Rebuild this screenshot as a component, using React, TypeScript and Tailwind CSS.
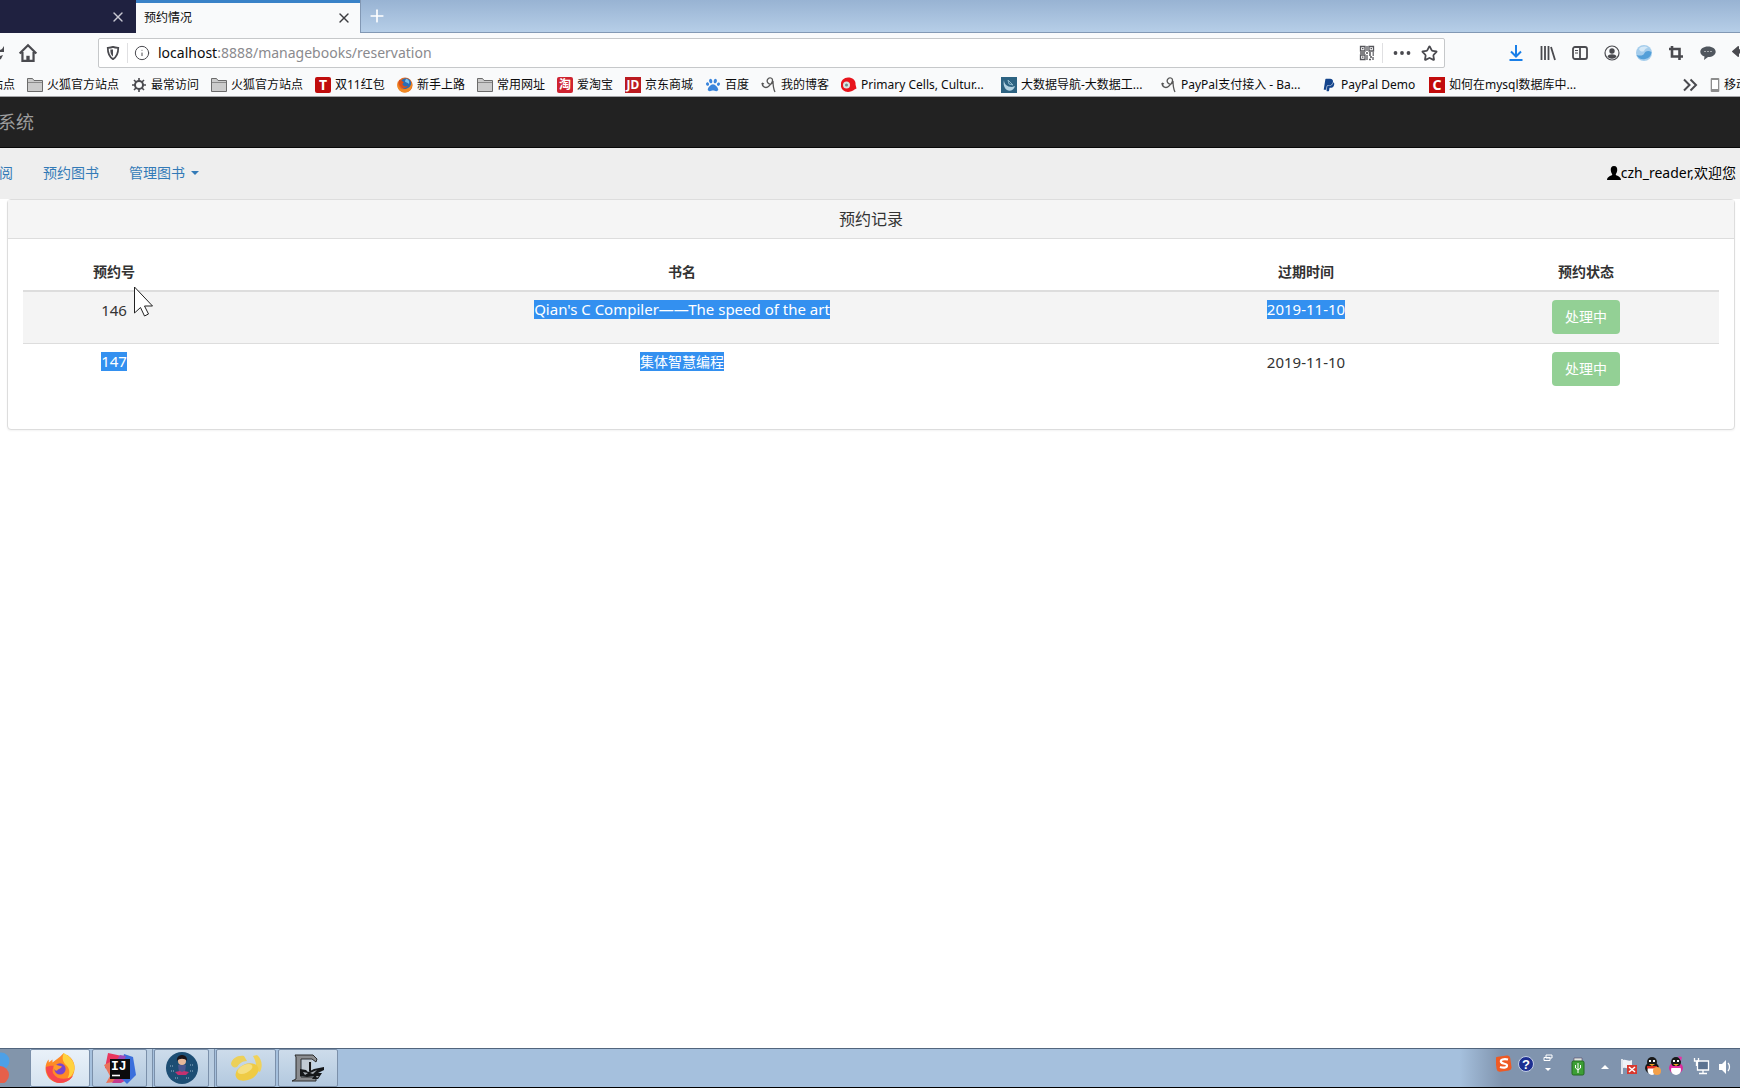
import type { ReactNode } from 'react'
import { X, Plus, Star, Info } from 'lucide-react'
import { FaPaypal, FaPaw, FaReply } from 'react-icons/fa'

function FolderIcon() {
  return (
    <svg viewBox="0 0 16 16" className="h-4 w-4" fill="#cbcbcb" stroke="#6b6b6b">
      <path d="M.5 14.500v-13h5l1.500 2h8.500v11z" />
      <path d="M1 5.500h14" stroke="#8a8a8a" />
    </svg>
  )
}

function GearIcon() {
  return (
    <svg viewBox="0 0 16 16" className="h-4 w-4" fill="none" stroke="#4a4a4f" strokeWidth="2">
      <circle cx="8" cy="8" r="4" />
      <path d="M8 1v3M8 12v3M1 8h3M12 8h3M3 3l2 2M11 11l2 2M13 3l-2 2M5 11l-2 2" strokeWidth="1.6" />
    </svg>
  )
}

function FirefoxOld() {
  return (
    <svg viewBox="0 0 16 16" className="h-4 w-4">
      <circle cx="8" cy="8" r="7.6" fill="#e66a1f" />
      <circle cx="8.8" cy="6.6" r="5.4" fill="#2b6db5" />
      <path d="M9 2c2 0 4 2 3 5-1-2-4-1-4-3z" fill="#7cc1e8" />
      <path d="M1 4c0 8 4 9 8 8 3-1 5-3 6-7 1 7-3 11-8 10.500C1 15-1 9 1 4z" fill="#f08a24" />
      <path d="M2 3c2 0 4 1 5 3-2 0-2 2 0 3 1 1 3 0 4 0-1 2-5 3-7 1S1 6 2 3z" fill="#d9501a" />
    </svg>
  )
}

function BlogIcon() {
  return (
    <svg viewBox="0 0 16 16" className="h-4 w-4" fill="none" stroke="#555" strokeWidth="1.3">
      <path d="M1 6c0 4 4 6 7 3 3-2 5-7 2-8S5 4 7 6s5 1 5-2c0 4 .5 8 2 11M1 6l2 1" />
    </svg>
  )
}

function EyeIcon() {
  return (
    <svg viewBox="0 0 16 16" className="h-4 w-4">
      <path d="M7 .5c5 0 8 3 7.500 7l1 4-2 1C12 14 9 15 7 15a7 7 0 0 1 0-14.500z" fill="#e8141c" />
      <circle cx="5.500" cy="8" r="3.500" fill="#d9e6e2" />
      <circle cx="5.500" cy="8" r="1.500" fill="#6f8f8c" />
    </svg>
  )
}

function DataNavIcon() {
  return (
    <svg viewBox="0 0 16 16" className="h-4 w-4">
      <path d="M0 0h16v16H0z" fill="#2d6382" />
      <path d="M3 3c0 4 3 7 8 7l3-1c-1 4-5 6-8 4S2 7 3 3z" fill="#b4d3e2" />
      <path d="M7 3l1 4 4 1M7 3l5 5" stroke="#8fb9cc" fill="none" />
    </svg>
  )
}

function PhoneIcon() {
  return (
    <svg viewBox="0 0 10 16" className="h-4 w-2.5">
      <rect x=".7" y="1" width="8.600" height="14" rx="1" fill="#8d8d8d" />
      <path d="M2 3h6v9H2z" fill="#fff" />
    </svg>
  )
}

function Badge({ className, children }: { className: string; children: ReactNode }) {
  return (
    <span className={`flex h-4 w-4 shrink-0 items-center justify-center font-bold text-white ${className}`}>
      {children}
    </span>
  )
}

const bookmarks = [
  { label: '火狐官方站点', icon: <FolderIcon />, width: 'w-[92px]' },
  { label: '最常访问', icon: <GearIcon />, width: 'w-[68px]' },
  { label: '火狐官方站点', icon: <FolderIcon />, width: 'w-[92px]' },
  { label: '双11红包', icon: <Badge className="rounded-xs bg-[#c00d0d] text-sm">T</Badge>, width: 'w-[70px]' },
  { label: '新手上路', icon: <FirefoxOld />, width: 'w-[68px]' },
  { label: '常用网址', icon: <FolderIcon />, width: 'w-[68px]' },
  { label: '爱淘宝', icon: <Badge className="rounded-xs bg-[#cf2330] text-xs">淘</Badge>, width: 'w-[56px]' },
  { label: '京东商城', icon: <Badge className="bg-[#bb1a20] text-xs">JD</Badge>, width: 'w-[68px]' },
  { label: '百度', icon: <FaPaw className="h-3.5 w-4 text-[#3a85dc]" />, width: 'w-[44px]' },
  { label: '我的博客', icon: <BlogIcon />, width: 'w-[68px]' },
  { label: 'Primary Cells, Cultur...', icon: <EyeIcon />, width: 'w-[148px]' },
  { label: '大数据导航-大数据工...', icon: <DataNavIcon />, width: 'w-[148px]' },
  { label: 'PayPal支付接入 - Ba...', icon: <BlogIcon />, width: 'w-[148px]' },
  { label: 'PayPal Demo', icon: <FaPaypal className="h-3.5 w-4 text-[#14448c]" />, width: 'w-[96px]' },
  { label: '如何在mysql数据库中...', icon: <Badge className="bg-[#c20c0c] text-sm">C</Badge>, width: 'w-[148px]' },
]

function TabBar() {
  return (
    <div className="flex h-[33px] bg-linear-to-b from-[#98b3d3] to-[#b7cfe8]">
      <div className="flex w-[136px] items-center justify-end bg-[#1f2140] pr-2.5">
        <button aria-label="关闭标签页">
          <X className="h-4 w-4 text-[#c8c8d2]" />
        </button>
      </div>
      <div className="flex w-56 items-center justify-between border-t-3 border-[#3a82c8] bg-[#f9fafb] px-2 text-xs text-[#0c0c0d]">
        <span>预约情况</span>
        <button aria-label="关闭标签页">
          <X className="h-4 w-4 text-[#3c3c40]" />
        </button>
      </div>
      <div className="flex flex-1 items-center border-b border-l border-[#8298b4] pl-1.5">
        <button aria-label="新建标签页">
          <Plus className="h-5 w-5 text-white" />
        </button>
      </div>
    </div>
  )
}

function Toolbar() {
  return (
    <div className="flex h-10 items-center bg-[#f9fafb] text-[#4a4a4f]">
      <div className="flex w-[98px] shrink-0 items-center gap-3">
        <button aria-label="刷新">
          <svg viewBox="0 0 6 16" className="h-4 w-1.5">
            <path d="M4 1v6H0V5l2-1zM0 11l3-1-2 4-1 .5z" fill="#4a4a4f" />
          </svg>
        </button>
        <button aria-label="主页">
          <svg viewBox="0 0 18 18" className="h-5 w-5" fill="none" stroke="#4a4a4f" strokeWidth="2">
            <path d="M1.500 9.500L9 2l7.500 7.500M4 8v8h10V8" />
            <path d="M9 16v-4.500" strokeWidth="3" />
          </svg>
        </button>
      </div>
      <div className="flex h-[30px] flex-1 items-center rounded-xs border border-[#c6c8ca] bg-white">
        <span className="flex h-5 w-[29px] items-center justify-center border-r border-[#e0e0e2]">
          <svg viewBox="0 0 14 16" className="h-3.5 w-3.5" fill="none" stroke="#4a4a4f" strokeWidth="2">
            <path d="M7 1c2 1 4 1 6 1 0 6-1 10-6 13C2 12 1 8 1 2c2 0 4 0 6-1z" />
            <path d="M7 4v8C4.500 10 4 8 4 4z" fill="#4a4a4f" stroke="none" />
          </svg>
        </span>
        <Info className="mr-2 ml-1.5 h-4 w-4" strokeWidth={1.5} />
        <div className="flex-1 text-sm text-[#8a8a8e]">
          <span className="text-[#0c0c0d]">localhost</span>:8888/managebooks/reservation
        </div>
        <button aria-label="二维码" className="flex h-5 w-6 items-center border-r border-[#e0e0e2]">
          <svg viewBox="0 0 16 16" className="h-4 w-4" fill="none" stroke="#55555a" strokeWidth="1.300">
            <path d="M1.500 1.500h4.500v4.500H1.500zM10 1.500h4.500v4.500H10zM1.500 10h4.500v4.500H1.500z" />
            <path d="M3 3.700h1.500M11.500 3.700H13M3 12.200h1.500M8 1v5M1 8h5M7 8h2M10 8h2M13.500 8H15M8 10v5M10 10h2M13.500 10H15M11 12h2M10 14.500h2M14 12v3" />
          </svg>
        </button>
        <button aria-label="页面操作" className="px-2.5">
          <svg viewBox="0 0 18 4" className="h-1 w-[18px]" fill="#4a4a4f">
            <circle cx="2.500" cy="2" r="1.900" />
            <circle cx="9" cy="2" r="1.900" />
            <circle cx="15.500" cy="2" r="1.900" />
          </svg>
        </button>
        <button aria-label="收藏" className="pr-1.5">
          <Star className="h-[17px] w-[17px]" strokeWidth={2.5} />
        </button>
      </div>
      <div className="flex w-[295px] shrink-0 items-center justify-end gap-4">
        <button aria-label="下载">
          <svg viewBox="0 0 16 16" className="h-4 w-4" fill="none" stroke="#1a7fe8" strokeWidth="2">
            <path d="M8 0v11M3 6.500l5 5 5-5M1.500 15h13" />
          </svg>
        </button>
        <button aria-label="书库">
          <svg viewBox="0 0 16 16" className="h-4 w-4" fill="none" stroke="#4a4a4f" strokeWidth="1.800">
            <path d="M1.500 1v14M5 1v14M8.500 1v14M11 2l4 13" />
          </svg>
        </button>
        <button aria-label="侧栏">
          <svg viewBox="0 0 16 16" className="h-4 w-4" fill="none" stroke="#4a4a4f" strokeWidth="1.800">
            <rect x="1" y="2" width="14" height="12" rx="2" />
            <path d="M8 2v12" />
            <path d="M3 5.500h3M3 8h3" strokeWidth="1" />
          </svg>
        </button>
        <button aria-label="账户">
          <svg viewBox="0 0 16 16" className="h-4 w-4">
            <circle cx="8" cy="8" r="7" fill="none" stroke="#4a4a4f" strokeWidth="1.200" />
            <circle cx="8" cy="6" r="2.700" fill="#4a4a4f" />
            <path d="M3.500 11.500c1-3 8-3 9 0-2 3-7 3-9 0z" fill="#4a4a4f" />
          </svg>
        </button>
        <button aria-label="扩展">
          <svg viewBox="0 0 16 16" className="h-4 w-4">
            <circle cx="8" cy="8" r="8" fill="#a5cdec" />
            <path d="M.5 10c3 1 7 1 8-2 1-2 4-3 7-1a8 8 0 0 1-15 3z" fill="#539fd8" />
            <path d="M3 4c2-3 7-3 9-1-2 0-3 1-4 3-1 1-4 1-5-2z" fill="#d4e8f7" />
          </svg>
        </button>
        <button aria-label="截图">
          <svg viewBox="0 0 16 16" className="h-4 w-4" fill="none" stroke="#4a4a4f" strokeWidth="2.600">
            <path d="M4 1v10.500h11M1 4h10.500v11" />
          </svg>
        </button>
        <button aria-label="消息">
          <svg viewBox="0 0 16 16" className="h-4 w-4">
            <path d="M8 1.500c4.500 0 7.700 2.300 7.700 5.200 0 3-3.200 5.300-7.700 5.300l-4 3 .5-3.500C1.800 10.500.3 8.800.3 6.700.3 3.800 3.500 1.500 8 1.500z" fill="#50565e" />
            <path d="M4.500 6.500h1M7.500 6.500h1M10.500 6.500h1" stroke="#f9fafb" />
          </svg>
        </button>
        <button aria-label="撤销" className="w-2 overflow-hidden">
          <FaReply className="h-4 w-4" />
        </button>
      </div>
    </div>
  )
}

function BookmarkBar() {
  return (
    <div className="flex h-6 items-center gap-3 overflow-hidden border-b border-[#a5a5a8] bg-[#f9fafb] text-xs whitespace-nowrap text-[#0c0c0d]">
      <a href="#" className="flex w-[15px] shrink-0 justify-end overflow-hidden">站点</a>
      {bookmarks.map((b, i) => (
        <a key={i} href="#" className={`flex shrink-0 items-center gap-1 ${b.width}`}>
          <span className="shrink-0">{b.icon}</span>
          {b.label}
        </a>
      ))}
      <button aria-label="更多书签" className="ml-auto">
        <svg viewBox="0 0 16 16" className="h-4 w-4" fill="none" stroke="#4a4a4f" strokeWidth="2">
          <path d="M2 2.500L7.500 8 2 13.500M8.500 2.500L14 8l-5.500 5.500" />
        </svg>
      </button>
      <a href="#" className="flex w-[30px] shrink-0 items-center gap-1 overflow-hidden">
        <span className="shrink-0"><PhoneIcon /></span>
        移动
      </a>
    </div>
  )
}

function Selected({ children }: { children: ReactNode }) {
  return <mark className="inline-block bg-[#3390f0] align-top leading-[19px] text-white">{children}</mark>
}

const th = 'border-b-2 border-[#ddd] p-2 text-center font-bold'
const td = 'p-2 text-center align-top'

function StatusButton() {
  return (
    <button disabled className="mx-auto block h-[34px] rounded bg-[#93d095] px-[13px] text-sm text-white">
      处理中
    </button>
  )
}

function ReservationPanel() {
  return (
    <section className="mr-[5px] ml-[7px] rounded border border-[#ddd] bg-white shadow-xs">
      <h3 className="border-b border-[#ddd] bg-[#f5f5f5] py-2 text-center text-base leading-[22px] text-[#333]">预约记录</h3>
      <div className="px-[15px] pt-[15px] pb-[35px]">
        <table className="w-full table-fixed text-sm leading-5 text-[#333]">
          <thead>
            <tr>
              <th className={`w-[182px] ${th}`}>预约号</th>
              <th className={th}>书名</th>
              <th className={`w-[294px] ${th}`}>过期时间</th>
              <th className={`w-[266px] ${th}`}>预约状态</th>
            </tr>
          </thead>
          <tbody>
            <tr className="h-[52px] border-b border-[#ddd] bg-[#f4f4f4]">
              <td className={`text-[15px] ${td}`}>146</td>
              <td className={`text-[15px] ${td}`}><Selected>Qian's C Compiler——The speed of the art</Selected></td>
              <td className={`text-[15px] ${td}`}><Selected>2019-11-10</Selected></td>
              <td className={td}><StatusButton /></td>
            </tr>
            <tr>
              <td className={`text-[15px] ${td}`}><Selected>147</Selected></td>
              <td className={td}><Selected>集体智慧编程</Selected></td>
              <td className={`text-[15px] ${td}`}>2019-11-10</td>
              <td className={td}><StatusButton /></td>
            </tr>
          </tbody>
        </table>
      </div>
    </section>
  )
}

function Page() {
  return (
    <main className="relative flex-1">
      <header className="flex h-[51px] items-center border-b border-[#080808] bg-[#222]">
        <a href="#" className="flex w-[34px] justify-end overflow-hidden text-lg whitespace-nowrap text-[#9d9d9d]">系统</a>
      </header>
      <nav className="flex h-[51px] items-center bg-[#eee] pr-1 pb-px text-sm text-[#337ab7]">
        <a href="#" className="flex w-[13px] justify-end overflow-hidden">阅</a>
        <a href="#" className="ml-[30px]">预约图书</a>
        <a href="#" className="ml-[30px] flex items-center gap-1.5">
          管理图书
          <span className="border-x-4 border-t-4 border-x-transparent border-t-[#337ab7]" />
        </a>
        <span className="ml-auto flex items-center text-black">
          <svg viewBox="0 0 14 14" className="h-3.5 w-3.5">
            <path d="M7 0c2.500 0 3.500 2 3.200 4.500C10 6.500 9 7.500 8.700 8.500c.3 1.500 5.300 1.500 5.300 5.500H0c0-4 5-4 5.300-5.500C5 7.500 4 6.500 3.800 4.500 3.500 2 4.500 0 7 0z" />
          </svg>
          czh_reader,欢迎您
        </span>
      </nav>
      <ReservationPanel />
      <svg viewBox="0 0 20 32" className="absolute top-[189px] left-[133px] h-8 w-5" fill="#fff" stroke="#222">
        <path d="M1.500 1v26l6-5.500 4 8.500 4-2-4-8h8z" />
      </svg>
    </main>
  )
}

const task = 'flex items-center justify-center rounded-xs border border-[#7b90aa] bg-linear-to-b'

function Taskbar() {
  return (
    <footer className="flex h-10 border-t border-b border-t-[#52657d] border-b-black bg-[#a5c0dd]">
      <button aria-label="开始" className="flex w-[30px] bg-[#8295ab]">
        <svg viewBox="0 0 10 34" className="h-[34px] w-2.5">
          <circle cx="1" cy="12" r="8.500" fill="#4da0e6" />
          <circle cx="0" cy="26" r="9" fill="#e5604a" />
        </svg>
      </button>
      <button aria-label="Firefox" className={`w-[60px] from-[#e9f1f9] to-[#d5e3f0] ${task}`}>
        <svg viewBox="0 0 32 32" className="h-[30px] w-[30px]">
          <path d="M16 4l4-4 1 3 3-1c5 4 8 8 7.500 15C31 26 24 32 16 32S1 26 .5 17C.5 12 2 9 4 7v3l4-3v3z" fill="#ff8a25" />
          <path d="M20 0c6 3 12 9 11.500 17-1 5-4 9-8 11 4-7 3-12-2-16-2-3-4-6-1.500-12z" fill="#ffd23f" />
          <path d="M1 15c0 10 7 17 15 17 6 0 11-3 14-8-6 5-17 5-21-2-2-4 0-7 1-8-3-1-6 0-9 1z" fill="#f6474f" />
          <circle cx="16" cy="17" r="6" fill="#7a46cc" />
          <path d="M9 14c3-3 6 0 9 0-1 3-5 3-5 5-2 0-4-2-4-5z" fill="#ff9a28" />
        </svg>
      </button>
      <button aria-label="IntelliJ IDEA" className={`ml-0.5 w-[55px] from-[#cddceb] to-[#b3c9df] ${task}`}>
        <svg viewBox="0 0 32 32" className="h-8 w-8">
          <path d="M4 1l14 3-7 16-10-4z" fill="#e8365d" />
          <path d="M0 13l10-5 3 22-11 1 4-7z" fill="#e8745b" />
          <path d="M8 31l6-9 12 4-9 5z" fill="#c43b8e" />
          <path d="M20 2l9 3 3 18-9 9-8-8z" fill="#3b6fdc" />
          <path d="M16 3l6 1-3 7h-8z" fill="#a048b8" />
          <path d="M6 7h20v20H6z" fill="#0b0b0d" />
          <path d="M8 23.500h8" stroke="#fff" strokeWidth="1.600" />
          <text x="7" y="18" fill="#fff" fontSize="13" fontWeight="bold" fontFamily="Liberation Mono, monospace">IJ</text>
        </svg>
      </button>
      <span className="w-1.5 border-r border-[#7b90aa] bg-[#b9cde1]" />
      <button aria-label="播放器" className={`ml-px w-[55px] from-[#cddceb] to-[#b3c9df] ${task}`}>
        <svg viewBox="0 0 32 32" className="h-8 w-8">
          <circle cx="16" cy="16" r="16" fill="#1d4e74" />
          <circle cx="16" cy="9" r="4" fill="#e8b99a" />
          <path d="M11 9c-1-8 11-8 10 0-2-3-8-3-10 0z" fill="#1b1418" />
          <path d="M12 13h8l-1 7h-6z" fill="#4b5790" />
          <path d="M9 20l5-1 2 1 2-1 5 1-3 3h-8z" fill="#c33270" />
          <path d="M4 14h4M24 13h3M5 19h4M24 19h4M9 26h3M20 26h4" stroke="#9bb7cc" strokeDasharray="1 1" />
        </svg>
      </button>
      <span className="w-1.5 border-r border-[#7b90aa] bg-[#b9cde1]" />
      <button aria-label="工具" className={`ml-px w-[60px] from-[#cddceb] to-[#b3c9df] ${task}`}>
        <svg viewBox="0 0 32 32" className="h-8 w-8">
          <path d="M1 12c1-6 7-9 13-8l3 5c-5 0-8 3-10 6-3 1-5 0-6-3z" fill="#ecd05a" />
          <path d="M23 4l4-1c5 4 6 11 3 17l-5-2c2-4 1-9-2-14z" fill="#f0d25a" />
          <ellipse cx="17" cy="20" rx="12" ry="8" fill="#efcb45" transform="rotate(-24 17 20)" />
          <ellipse cx="15" cy="17" rx="8" ry="4" fill="#f5df80" transform="rotate(-24 15 17)" />
        </svg>
      </button>
      <button aria-label="录像工具" className={`ml-0.5 w-[60px] from-[#cddceb] to-[#b3c9df] ${task}`}>
        <svg viewBox="0 0 32 32" className="h-8 w-8">
          <path d="M3 3h18l4 4-1 3-4-3H9v18h15v4H0l4-2V5z" fill="#8b8d90" stroke="#2a2a2a" />
          <path d="M10 8h10v12H10z" fill="#c3ccd4" />
          <path d="M18 10v9" stroke="#16181a" strokeWidth="2" />
          <path d="M8 17l6 1 2 2 6-3 10-2v3l-6 3h4l-4 6h-6l2-3-7 1-7-1z" fill="#16181a" />
          <path d="M11 20l5 1-3 2zM18 21l7-3-4 4zM24 24h3l-2 2z" fill="#a8aeb4" />
        </svg>
      </button>
      <div className="ml-auto flex w-[280px] items-center bg-linear-to-r from-[#a5c0dd] to-[#8094ae] to-15% pl-9">
        <svg viewBox="0 0 244 36" className="h-9 w-[244px]">
          <rect x="0" y="6" width="15" height="15" rx="3" fill="#ee5a24" transform="rotate(-8 8 14)" />
          <path d="M12 9.500c-4-1-8 0-7 2.500s6 1 6 3.500-4 2.500-7 1.500" fill="none" stroke="#fff" strokeWidth="2.200" />
          <circle cx="30" cy="14" r="7.500" fill="#1d2f92" stroke="#c3cfe6" />
          <text x="26" y="19" fill="#fff" fontSize="13" fontWeight="bold" fontFamily="Liberation Sans, sans-serif">?</text>
          <path d="M50 5h6v3h-6zM48 7.500h6v3h-6z" fill="#8094ae" stroke="#fff" />
          <path d="M49 18h6l-3 3z" fill="#fff" />
          <path d="M78 8h8v4h-8z" fill="#dfe6df" stroke="#546" strokeWidth=".6" />
          <rect x="76" y="11" width="12" height="14" rx="1.500" fill="#3c9f35" stroke="#236820" />
          <path d="M82 13v10M79.500 15v3l2.500 2 2.500-2v-3" fill="none" stroke="#fff" />
          <path d="M105 19h8l-4-4z" fill="#fff" />
          <path d="M126 9v15" stroke="#fff" strokeWidth="1.500" />
          <path d="M127 10c4-1 5 2 9 0v8c-4 2-5-1-9 0z" fill="#eef2f7" />
          <path d="M131 15h10v9h-10z" fill="#d8392f" />
          <path d="M133 17l6 5M139 17l-6 5" stroke="#fff" strokeWidth="1.500" />
          <ellipse cx="156" cy="18" rx="7" ry="6" fill="#181818" />
          <ellipse cx="156" cy="20" rx="4.500" ry="5" fill="#fff" />
          <circle cx="156" cy="12" r="5" fill="#181818" />
          <path d="M153 11h2M157 11h2" stroke="#fff" strokeWidth="2.200" />
          <path d="M153 14h6l-3 2z" fill="#f4a623" />
          <path d="M151 16h10v2.500h-10z" fill="#df2c22" />
          <circle cx="161" cy="21" r="4" fill="#f3a04a" />
          <ellipse cx="180" cy="18" rx="7" ry="6" fill="#d92a9a" />
          <ellipse cx="180" cy="20" rx="5" ry="5" fill="#fff" />
          <circle cx="180" cy="12" r="5" fill="#181818" />
          <path d="M177 11h2M181 11h2" stroke="#fff" strokeWidth="2.200" />
          <path d="M177 14h6l-3 2z" fill="#f4a623" />
          <path d="M175 16h10v2h-10zM182 6l4 1-1 4z" fill="#e531a5" />
          <path d="M201.500 11h11v9h-11zM203 23.500h8M207 20v3" fill="#5d7390" stroke="#fff" strokeWidth="1.300" />
          <path d="M198.500 8v3h4V8M200.500 11v5" fill="none" stroke="#fff" strokeWidth="1.300" />
          <path d="M223 14h3l4-4v14l-4-4h-3z" fill="#fff" />
          <path d="M232 13c2 2 2 6 0 8" fill="none" stroke="#fff" strokeWidth="1.300" />
        </svg>
      </div>
    </footer>
  )
}

export default function App() {
  return (
    <div className="flex min-h-screen flex-col bg-white font-['Noto_Sans','Noto_Sans_CJK_SC',sans-serif]">
      <TabBar />
      <Toolbar />
      <BookmarkBar />
      <Page />
      <Taskbar />
    </div>
  )
}
